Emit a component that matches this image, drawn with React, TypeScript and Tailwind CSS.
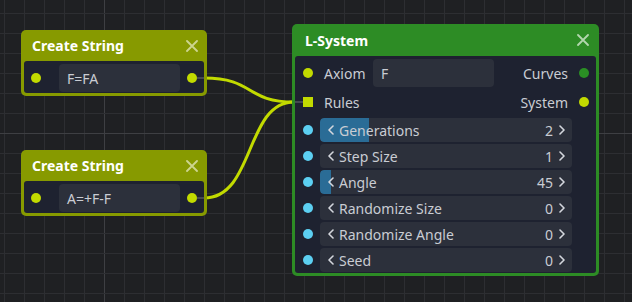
import type { ReactNode } from 'react';

const OLIVE = '#879a00';
const GREEN = '#2d8c25';
const WIRE = '#c2da00';

const FONT = { fontFamily: '"Noto Sans", "Open Sans", sans-serif' };

function Dot({ color, square = false }: { color: string; square?: boolean }) {
  return (
    <div
      className={`w-[10px] h-[10px] shrink-0 ${square ? '' : 'rounded-full'}`}
      style={{ backgroundColor: color }}
    />
  );
}

function CloseIcon({ color }: { color: string }) {
  return (
    <svg width="12" height="12" viewBox="0 0 12 12" className="shrink-0">
      <path d="M1 1 L11 11 M11 1 L1 11" stroke={color} strokeWidth="1.8" strokeLinecap="round" />
    </svg>
  );
}

function Chevron({ dir }: { dir: 'l' | 'r' }) {
  return (
    <svg width="6" height="10" viewBox="0 0 6 10" className="shrink-0">
      <path
        d={dir === 'l' ? 'M5 1 L1 5 L5 9' : 'M1 1 L5 5 L1 9'}
        stroke="#d4d7dd"
        strokeWidth="1.6"
        fill="none"
        strokeLinecap="round"
        strokeLinejoin="round"
      />
    </svg>
  );
}

function Node({
  title,
  color,
  closeColor,
  className,
  headerClass,
  children,
}: {
  title: string;
  color: string;
  closeColor: string;
  className: string;
  headerClass: string;
  children: ReactNode;
}) {
  return (
    <div className={`absolute rounded-[5px] px-[3px] pb-[3px] ${className}`} style={{ backgroundColor: color }}>
      <div className={`flex items-center justify-between text-[14px] font-bold text-white ${headerClass}`}>
        <span>{title}</span>
        <CloseIcon color={closeColor} />
      </div>
      <div className="bg-[#1e2230] rounded-[3px]">{children}</div>
    </div>
  );
}

function StringNode({ top, value }: { top: string; value: string }) {
  return (
    <Node
      title="Create String"
      color={OLIVE}
      closeColor="#cdd58f"
      className={`left-[21px] w-[186px] ${top}`}
      headerClass="h-[31px] pl-[8px] pr-[6px]"
    >
      <div className="flex items-center h-[32px] pt-[3px] pb-[1px] pl-[7px]">
        <Dot color={WIRE} />
        <div className="ml-[18px] w-[121px] h-[28px] rounded-[4px] bg-[#2c303b] flex items-center px-[8px] text-[14px] text-[#c9ccd3]">
          {value}
        </div>
        <div className="flex-1" />
        <Dot color={WIRE} />
        <div className="w-[7px] h-[2px] bg-[#454952]" />
      </div>
    </Node>
  );
}

function Spinner({ label, value, fill }: { label: string; value: string; fill: number }) {
  return (
    <div className="flex items-center h-[24px]">
      <Dot color="#5ccff2" />
      <div className="relative ml-[7px] w-[252px] h-[24px] rounded-[4px] bg-[#2c303b] overflow-hidden">
        {fill > 0 && (
          <div className="absolute left-0 top-0 bottom-0 bg-[#2a6c96] rounded-l-[4px]" style={{ width: fill }} />
        )}
        <div className="relative flex items-center h-full pl-[8px] pr-[7px] text-[14px] text-[#c9ccd3]">
          <Chevron dir="l" />
          <span className="ml-[5px] flex-1">{label}</span>
          <span>{value}</span>
          <span className="ml-[6px]">
            <Chevron dir="r" />
          </span>
        </div>
      </div>
    </div>
  );
}

export default function App() {
  return (
    <div className="relative w-[632px] h-[302px] overflow-hidden bg-[#1f2023]" style={FONT}>
      <svg className="absolute inset-0" width="632" height="302">
        {Array.from({ length: 32 }, (_, i) => (
          <line
            key={'v' + i}
            x1={4.5 + i * 20}
            y1={0}
            x2={4.5 + i * 20}
            y2={302}
            stroke={i === 5 ? '#3e3f43' : '#2d2e32'}
            strokeWidth="1"
          />
        ))}
        {Array.from({ length: 16 }, (_, i) => (
          <line
            key={'h' + i}
            x1={0}
            y1={13.5 + i * 20}
            x2={632}
            y2={13.5 + i * 20}
            stroke={i === 6 ? '#3e3f43' : '#2d2e32'}
            strokeWidth="1"
          />
        ))}
        <path d="M204 78 C255 78 245 102 294 102" stroke={WIRE} strokeWidth="3" fill="none" />
        <path d="M204 198 C255 198 245 102 294 102" stroke={WIRE} strokeWidth="3" fill="none" />
      </svg>

      <StringNode top="top-[30px]" value="F=FA" />
      <StringNode top="top-[150px]" value="A=+F-F" />

      <Node
        title="L-System"
        color={GREEN}
        closeColor="#b3d6ae"
        className="left-[292px] top-[24px] w-[307px]"
        headerClass="h-[32px] pl-[10px] pr-[7px]"
      >
        <div className="flex flex-col pt-[3px] pb-[1px] pl-[8px] pr-[7px] text-[14px] text-[#c9ccd3]">
          <div className="flex items-center h-[28px]">
            <Dot color={WIRE} />
            <span className="ml-[11px] w-[49px]">Axiom</span>
            <div className="w-[121px] h-[28px] rounded-[4px] bg-[#2c303b] flex items-center px-[8px]">F</div>
            <span className="flex-1 text-right mr-[11px]">Curves</span>
            <Dot color="#2a8f24" />
          </div>
          <div className="flex items-center h-[28px] mt-[1px] relative">
            <div className="absolute left-[-8px] w-[8px] h-[2px] bg-[#454952]" />
            <Dot color={WIRE} square />
            <span className="ml-[11px] flex-1">Rules</span>
            <span className="mr-[11px]">System</span>
            <Dot color={WIRE} />
          </div>
          <div className="flex flex-col gap-[2px] mt-[2px]">
            <Spinner label="Generations" value="2" fill={49} />
            <Spinner label="Step Size" value="1" fill={0} />
            <Spinner label="Angle" value="45" fill={11} />
            <Spinner label="Randomize Size" value="0" fill={0} />
            <Spinner label="Randomize Angle" value="0" fill={0} />
            <Spinner label="Seed" value="0" fill={0} />
          </div>
        </div>
      </Node>
    </div>
  );
}
